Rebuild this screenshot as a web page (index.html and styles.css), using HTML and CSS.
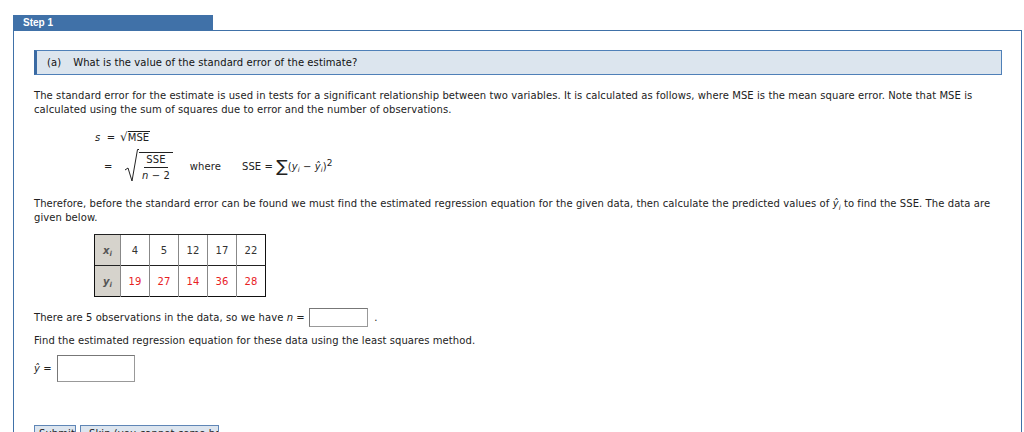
FILE: index.html
```html
<!DOCTYPE html>
<html>
<head>
<meta charset="utf-8">
<link rel="stylesheet" href="styles.css">
</head>
<body>
<div class="step-tab">Step 1</div>
<div class="step-box">
  <div class="q-head"><span class="q-lbl">(a)</span>What is the value of the standard error of the estimate?</div>
  <p class="para">The standard error for the estimate is used in tests for a significant relationship between two variables. It is calculated as follows, where MSE is the mean square error. Note that MSE is calculated using the sum of squares due to error and the number of observations.</p>
  <div class="formula">
    <div class="f-row f-row1">
      <span class="f-lhs"><i>s</i></span><span class="f-eq">=</span>
      <span class="rad-small">√</span><span class="over">MSE</span>
    </div>
    <div class="f-row f-row2">
      <span class="f-eq f-eq2">=</span>
      <svg class="rad-big" width="15" height="34" viewBox="0 0 15 34"><path d="M1 21 L4 19 L8 32 L13.5 0.5 L15 0.5" fill="none" stroke="#222" stroke-width="1"/></svg>
      <span class="frac"><span class="num">SSE</span><span class="den"><i>n</i> − 2</span></span>
      <span class="where">where</span>
      <span class="sse">SSE = <span class="sigma">∑</span>(<i>y</i><sub><i>i</i></sub> − <i>ŷ</i><sub><i>i</i></sub>)<sup>2</sup></span>
    </div>
  </div>
  <p class="para para2">Therefore, before the standard error can be found we must find the estimated regression equation for the given data, then calculate the predicted values of <i>ŷ</i><sub class="s"><i>i</i></sub> to find the SSE. The data are given below.</p>
  <table class="data">
    <tr><th><i>x<sub>i</sub></i></th><td>4</td><td>5</td><td>12</td><td>17</td><td>22</td></tr>
    <tr class="red"><th><i>y<sub>i</sub></i></th><td>19</td><td>27</td><td>14</td><td>36</td><td>28</td></tr>
  </table>
  <p class="line-n">There are 5 observations in the data, so we have <i>n</i> = <span class="inp inp-n"></span> .</p>
  <p class="line-find">Find the estimated regression equation for these data using the least squares method.</p>
  <div class="line-yhat"><i>ŷ</i> = <span class="inp inp-y"></span></div>
  <div class="btns"><span class="btn btn-submit">Submit</span><span class="btn btn-skip">Skip (you cannot come back)</span></div>
</div>
</body>
</html>
```
FILE: styles.css
```css
html, body { margin: 0; padding: 0; background: #fff; }
body { font-family: "DejaVu Sans", Verdana, sans-serif; font-size: 10px; color: #222; letter-spacing: 0.08px; }
.step-tab {
  margin: 15px 0 0 13px; width: 190px; height: 15px; line-height: 15px;
  padding-left: 10px; background: #4071a8; color: #fff; font-weight: bold;
  font-family: "Liberation Sans", Arial, sans-serif; font-size: 10px; letter-spacing: 0;
}
.step-box {
  margin-left: 13px; width: 1009px; height: 417px;
  border: 1px solid #4071a8; border-bottom: none;
  padding: 19px 0 0 20px; box-sizing: border-box;
}
.q-head {
  width: 968px; height: 25px; box-sizing: border-box;
  background: #dce5ee; border: 1px solid #4f80b8; border-left: 3px solid #3a6aa3;
  line-height: 23px; padding-left: 10px; font-size: 10px; color: #111;
}
.q-lbl { margin-right: 12px; }
.para { margin: 14px 0 0 0; width: 968px; line-height: 14px; font-size: 10px; }
.formula { margin: 12px 0 0 61px; }
.f-row { display: flex; align-items: center; }
.f-row1 { height: 16px; }
.f-lhs { width: 9px; text-align: left; }
.f-eq { width: 14px; text-align: center; }
.f-eq2 { width: 20px; text-align: left; margin-left: 9px; }
.rad-small { font-size: 12px; margin-left: 2px; line-height: 14px; }
.over { border-top: 1px solid #222; line-height: 12px; padding-right: 1px; }
.f-row2 { margin-top: 4px; height: 34px; }
.frac { display: inline-flex; flex-direction: column; align-items: center; border-top: 1px solid #222; padding: 1px 3px 0 3px; margin-top: 2px; }
.num { border-bottom: 1px solid #222; padding: 0 2px 1px; line-height: 12px; }
.den { line-height: 13px; padding: 1px 0 0; }
.where { margin-left: 17px; }
.sse { margin-left: 21px; }
.sigma { font-size: 17px; vertical-align: -2px; line-height: 10px; }
.sse sub { font-size: 7px; vertical-align: -2px; line-height: 0; }
.sse sup { font-size: 9px; vertical-align: 4px; line-height: 0; }
sub.s { font-size: 7px; vertical-align: baseline; position: relative; top: 3px; line-height: 0; }
.para2 { margin-top: 14px; }
.data { margin: 9px 0 0 60px; border-collapse: collapse; border: 1px solid #111; }
.data th, .data td { height: 30px; padding: 0; text-align: center; font-size: 10px; border-left: 1px solid #888; border-top: 1px solid #222; }
.data th { width: 25px; background: #d6d3cc; color: #555; font-weight: bold; border-left: 1px solid #111; }
.data th sub { font-size: 7px; vertical-align: baseline; position: relative; top: 2px; }
.data td { width: 28px; color: #333; }
.data tr.red td { color: #e8211f; }
.line-n { margin: 11px 0 0 0; display: flex; align-items: center; line-height: 14px; white-space: pre; }
.inp { display: inline-block; border: 1px solid #999; border-top-color: #777; border-left-color: #777; background: #fff; }
.inp-n { width: 57px; height: 17px; margin: 0 3px 0 1px; }
.line-find { margin: 7px 0 0 0; line-height: 14px; }
.line-yhat { margin-top: 7px; display: flex; align-items: center; white-space: pre; }
.inp-y { width: 76px; height: 25px; margin-left: 2px; }
.btns { margin-top: 43px; display: flex; gap: 4px; }
.btn { display: inline-block; box-sizing: border-box; height: 18px; padding: 0 8px; border: 1px solid #5f86b6; background: #dce5ef; font-size: 10px; line-height: 16px; color: #222; overflow: hidden; white-space: nowrap; }
.btn-submit { width: 42px; padding: 0 4px; }
.btn-skip { width: 139px; }
```
